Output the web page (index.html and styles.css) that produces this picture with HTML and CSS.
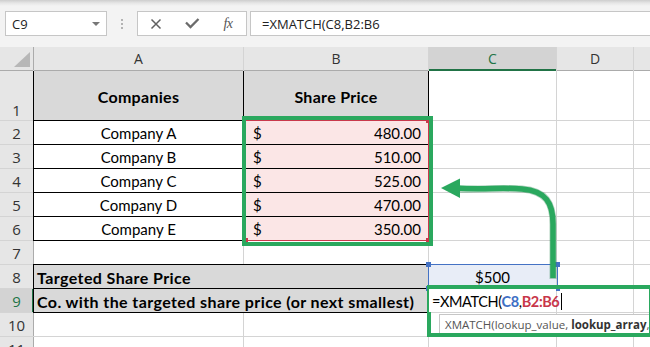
FILE: index.html
```html
<!DOCTYPE html>
<html>
<head>
<meta charset="utf-8">
<link rel="stylesheet" href="styles.css">
</head>
<body>
<div class="app">
  <div class="toolbar">
    <div class="namebox"><span>C9</span><span class="caret"></span></div>
    <div class="grip"><i></i><i></i><i></i></div>
    <div class="fbtns">
      <span class="fbtn"><svg width="12" height="12" viewBox="0 0 12 12"><path d="M1.5 1.5 L10.5 10.5 M10.5 1.5 L1.5 10.5" stroke="#616161" stroke-width="1.5" fill="none"/></svg></span>
      <span class="fbtn"><svg width="15" height="11" viewBox="0 0 15 11"><path d="M1 4.5 L5.5 9 L13.5 1" stroke="#6b6b6b" stroke-width="2.3" fill="none"/></svg></span>
      <span class="fbtn fx">fx</span>
    </div>
    <div class="formula">=XMATCH(C8,B2:B6</div>
  </div>

  <div class="grid">
    <div class="corner"><span class="tri"></span></div>
    <div class="hd">A</div>
    <div class="hd">B</div>
    <div class="hd sel">C</div>
    <div class="hd">D</div>
    <div class="hd"></div>

    <div class="rh r1">1</div>
    <div class="c title">Companies</div>
    <div class="c title">Share Price</div>
    <div class="c"></div><div class="c"></div><div class="c"></div>

    <div class="rh">2</div>
    <div class="c tb">Company A</div>
    <div class="c price"><span>$</span><span>480.00</span></div>
    <div class="c"></div><div class="c"></div><div class="c"></div>

    <div class="rh">3</div>
    <div class="c tb">Company B</div>
    <div class="c price"><span>$</span><span>510.00</span></div>
    <div class="c"></div><div class="c"></div><div class="c"></div>

    <div class="rh">4</div>
    <div class="c tb">Company C</div>
    <div class="c price"><span>$</span><span>525.00</span></div>
    <div class="c"></div><div class="c"></div><div class="c"></div>

    <div class="rh">5</div>
    <div class="c tb">Company D</div>
    <div class="c price"><span>$</span><span>470.00</span></div>
    <div class="c"></div><div class="c"></div><div class="c"></div>

    <div class="rh">6</div>
    <div class="c tb">Company E</div>
    <div class="c price"><span>$</span><span>350.00</span></div>
    <div class="c"></div><div class="c"></div><div class="c"></div>

    <div class="rh">7</div>
    <div class="c"></div><div class="c"></div><div class="c"></div><div class="c"></div><div class="c"></div>

    <div class="rh">8</div>
    <div class="c lbl">Targeted Share Price</div>
    <div class="c c8">$500</div>
    <div class="c"></div><div class="c"></div>

    <div class="rh sel">9</div>
    <div class="c lbl">Co. with the targeted share price (or next smallest)</div>
    <div class="c c9">=XMATCH(<b class="ref1">C8</b>,<b class="ref2">B2:B6</b><span class="caretline"></span></div>
    <div class="c"></div><div class="c"></div>

    <div class="rh">10</div>
    <div class="c"></div><div class="c"></div><div class="c"></div><div class="c"></div><div class="c"></div>

    <div class="rh">11</div>
    <div class="c"></div><div class="c"></div><div class="c"></div><div class="c"></div><div class="c"></div>
  </div>

  <!-- overlays -->
  <div class="refbox red"></div>
  <span class="h red-h h1"></span>
  <span class="h red-h h2"></span>
  <span class="h red-h h3"></span>
  <div class="refbox blue"></div>
  <span class="h blue-h h4"></span>
  <span class="h blue-h h5"></span>
  <span class="h blue-h h6"></span>
  <span class="h blue-h h7"></span>
  <div class="tooltip">XMATCH(lookup_value, <b>lookup_array</b>,</div>
  <div class="mark m1"></div>
  <div class="mark m2"></div>
  <svg class="arrow" width="650" height="347" viewBox="0 0 650 347">
    <path d="M553 279 L553 224 C553 203 546 191 522 189 C500 187 485 190 456 189" stroke="#1d7d45" stroke-width="7" fill="none" opacity="0.35"/>
    <path d="M553 278 L553 224 C553 203 546 191 522 189 C500 187 485 190 456 188" stroke="#2aa85e" stroke-width="5.5" fill="none"/>
    <polygon points="441,188 460,178.5 460,198" fill="#2aa85e"/>
  </svg>
</div>
</body>
</html>
```

FILE: styles.css
```css
* { box-sizing: border-box; margin: 0; padding: 0; }
html, body { width: 650px; height: 347px; overflow: hidden; background: #fff; }
body { font-family: "Lato", "Liberation Sans", sans-serif; color: #000; }

.app { position: relative; width: 650px; height: 347px; overflow: hidden; }

/* ---------- formula bar ---------- */
.toolbar {
  height: 47px;
  display: flex;
  align-items: flex-start;
  padding: 11px 0 0 5px;
  background: linear-gradient(#cdcdcd 0, #e6e6e6 3px, #f3f3f3 6px);
  font-family: "Open Sans", "Noto Sans", sans-serif;
  font-size: 13px;
  color: #222;
}
.namebox {
  width: 102px; height: 25px;
  background: #fff; border: 1px solid #c6c6c6;
  display: flex; align-items: center; justify-content: space-between;
  padding: 0 6px 0 6px;
}
.caret {
  width: 0; height: 0;
  border-left: 4px solid transparent; border-right: 4px solid transparent;
  border-top: 4px solid #777;
}
.grip {
  width: 30px; height: 25px;
  display: flex; flex-direction: column; align-items: center; justify-content: center; gap: 2px;
}
.grip i { display: block; width: 2px; height: 2px; background: #b3b3b3; }
.fbtns {
  width: 110px; height: 25px;
  background: #fff; border: 1px solid #c6c6c6;
  display: flex; align-items: center;
}
.fbtn { width: 36px; display: flex; align-items: center; justify-content: center; }
.fx { font-family: "Liberation Serif", serif; font-style: italic; font-size: 14px; color: #555; letter-spacing: -0.5px; }
.formula {
  flex: 1; height: 25px; margin-left: 3px;
  background: #fff; border: 1px solid #c6c6c6; border-right: none;
  display: flex; align-items: center; padding-left: 11px;
}

/* ---------- sheet grid ---------- */
.grid {
  display: grid;
  grid-template-columns: 33px 209px 184px 127px 76px 1fr;
  grid-template-rows: 23px 49px repeat(10, 23px);
  gap: 1px;
  background: #d4d4d4;
}
.corner {
  background: #e6e6e6;
  display: flex; justify-content: flex-end; align-items: flex-end;
  padding: 0 3px 3px 0;
  box-shadow: 0 1px 0 #ababab, 1px 0 0 #ababab;
}
.tri { width: 0; height: 0; border-left: 16px solid transparent; border-bottom: 15px solid #b7b7b7; }
.hd {
  background: #e6e6e6;
  display: flex; align-items: center; justify-content: center;
  font-family: "Open Sans", "Noto Sans", sans-serif; font-size: 14px; color: #333;
  box-shadow: 0 1px 0 #ababab;
}
.hd.sel { background: #d3d3d3; color: #217346; box-shadow: inset 0 -1px 0 #217346, 0 1px 0 #217346; }
.rh {
  background: #e6e6e6;
  display: flex; align-items: center; justify-content: center;
  font-family: "Open Sans", "Noto Sans", sans-serif; font-size: 15px; color: #333;
  box-shadow: 1px 0 0 #ababab;
  padding-top: 1px;
}
.rh.r1 { align-items: flex-end; padding-bottom: 0; }
.rh.sel { background: #d3d3d3; color: #217346; box-shadow: inset -1px 0 0 #217346, 1px 0 0 #217346; }

.c {
  background: #fff;
  display: flex; align-items: center;
  font-size: 15px;
  white-space: nowrap;
  padding: 1px 4px 0;
}
.title {
  background: #d9d9d9; font-weight: 700; justify-content: center;
  font-size: 16px; letter-spacing: 0.3px;
  box-shadow: 1px 0 0 #000, -1px 0 0 #000, 0 1px 0 #000;
}
.tb { justify-content: center; box-shadow: 0 0 0 1px #000; }
.price {
  background: #fbe6e6; justify-content: space-between;
  padding: 1px 7px 0 9px;
  box-shadow: 0 0 0 1px #000;
}
.lbl {
  grid-column: span 2;
  background: #d9d9d9; font-weight: 700; padding-left: 3px;
  font-size: 16px; letter-spacing: 0.4px;
  box-shadow: 0 0 0 1px #000;
}
.c8 { background: #e8edf7; justify-content: center; }
.c9 { padding-left: 3px; font-size: 14.5px; letter-spacing: -0.4px; position: relative; z-index: 1; overflow: visible; }
.ref1 { color: #3e6fc4; }
.ref2 { color: #c8364a; }
.caretline { display: inline-block; width: 1px; height: 17px; background: #000; margin-left: 2px; flex: none; }

/* ---------- overlays ---------- */
.refbox { position: absolute; }
.refbox.red { left: 243px; top: 120px; width: 186px; height: 121px; border: 1px solid #c9394c; }
.refbox.blue { left: 428px; top: 264px; width: 130px; height: 25px; border: 1px solid #4472c4; }
.h { position: absolute; width: 4px; height: 4px; }
.red-h { background: #c9394c; }
.blue-h { background: #4472c4; width: 5px; height: 5px; }
.h1 { left: 426px; top: 119px; }
.h2 { left: 426px; top: 238px; }
.h3 { left: 244px; top: 238px; }
.h4 { left: 426px; top: 262px; }
.h5 { left: 555px; top: 262px; }
.h6 { left: 426px; top: 286px; }
.h7 { left: 555px; top: 286px; }

.tooltip {
  position: absolute; left: 439px; top: 314px;
  height: 20px; width: 214px; padding: 0 0 0 5px;
  background: #fff; border: 1px solid #c6c6c6;
  font-family: "Open Sans", "Noto Sans", sans-serif; font-size: 11.5px; color: #555;
  white-space: nowrap; display: flex; align-items: center;
}
.tooltip b { color: #333; margin-left: 3px; }

.mark { position: absolute; border: 4px solid #2aa85e; }
.mark.m1 { left: 242px; top: 116px; width: 191px; height: 130px; }
.mark.m2 { left: 427px; top: 285px; width: 226px; height: 52px; }

.arrow { position: absolute; left: 0; top: 0; pointer-events: none; }
```
